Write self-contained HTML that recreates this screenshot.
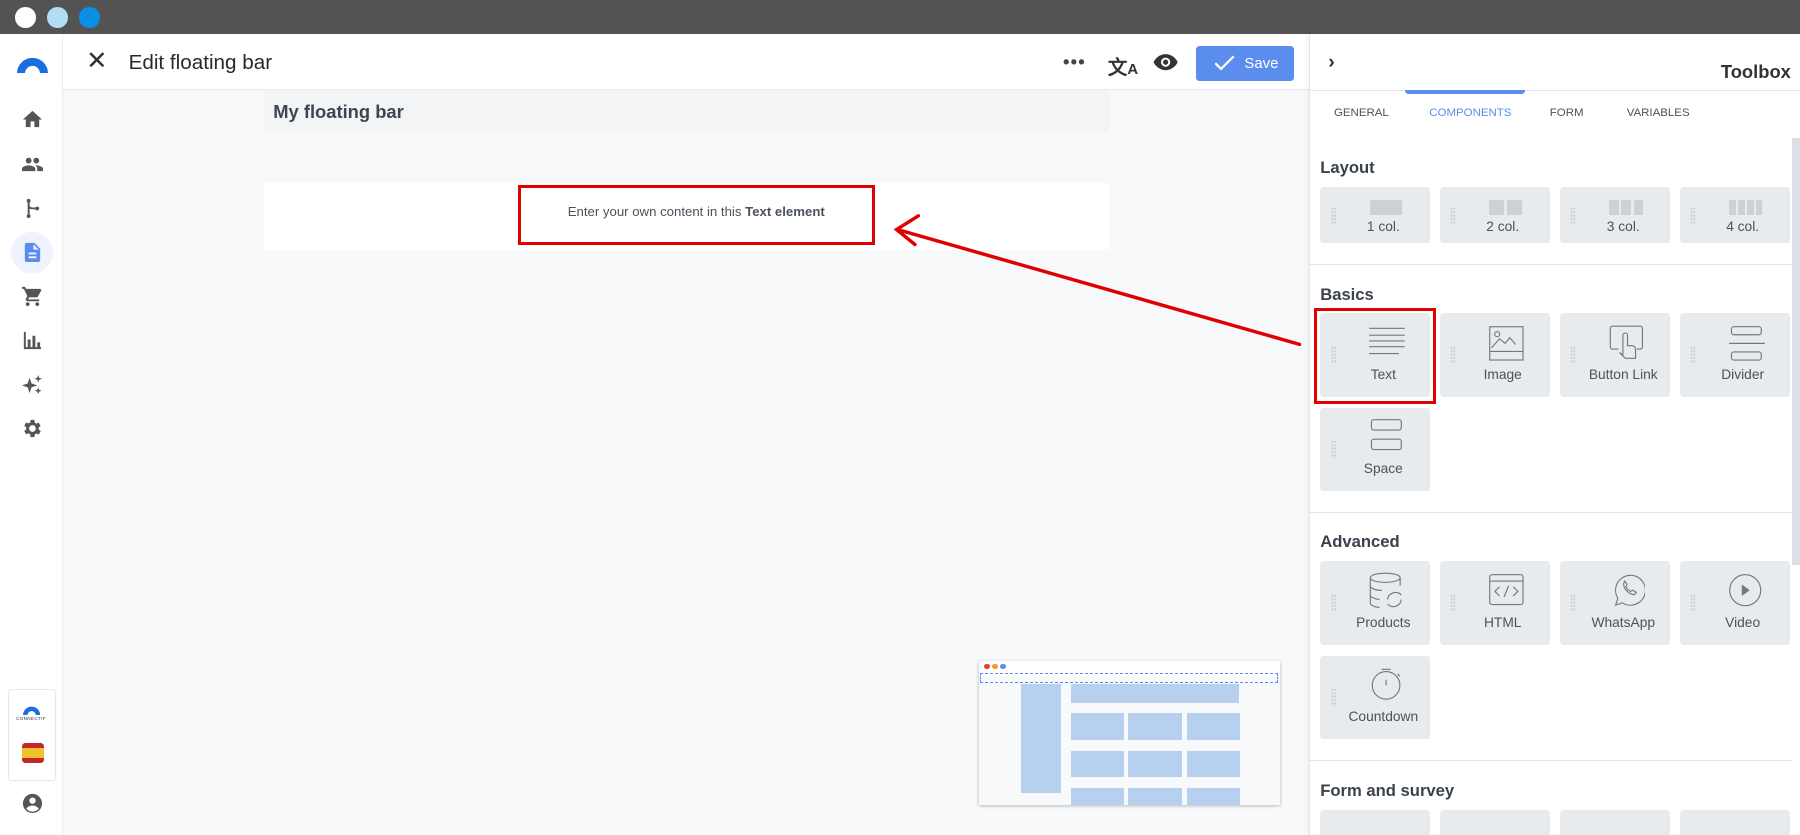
<!DOCTYPE html>
<html><head><meta charset="utf-8"><style>
*{box-sizing:border-box;margin:0;padding:0}
html,body{width:1800px;height:835px;overflow:hidden;background:#f8f9fa;font-family:"Liberation Sans",sans-serif}
#w{zoom:1.148;width:1568px;height:728px;position:relative;background:#f8f9fa}
.a{position:absolute}
.tile{position:absolute;width:96px;background:#e8ebee;border-radius:3px}
.tile .l{position:absolute;left:0;right:0;text-align:center;font-size:12px;color:#4a525c}
.tile .g{position:absolute;left:9px;width:5px;height:16px;background-image:radial-gradient(circle,#c9ced3 0.9px,transparent 1px);background-size:2.5px 3px}
.h{position:absolute;left:1150px;font-size:14.5px;font-weight:bold;color:#3a424c}
.dv{position:absolute;left:1141px;width:420px;height:1px;background:#e3e5e8}
.si{position:absolute;left:18px;width:20px;height:20px}
</style></head><body><div id="w">
<div class="a" style="left:0;top:0;width:1568px;height:30px;background:#535353"></div>
<div class="a" style="left:13px;top:6px;width:18px;height:18px;border-radius:50%;background:#fff"></div>
<div class="a" style="left:41px;top:6px;width:18px;height:18px;border-radius:50%;background:#b3dcf5"></div>
<div class="a" style="left:69px;top:6px;width:18px;height:18px;border-radius:50%;background:#0a8fe8"></div>

<div class="a" style="left:0;top:30px;width:55px;height:698px;background:#fff;border-right:1px solid #eceef0"></div>
<svg class="a" style="left:15px;top:48px" width="27" height="16" viewBox="0 0 27 16"><path d="M0 16 A13.5 13.5 0 0 1 27 16 L20 16 A6.5 6.5 0 0 0 7 16Z" fill="#1a6fe0"/></svg>

<div class="a" style="left:55px;top:30px;width:1085px;height:48px;background:#fff;border-bottom:1px solid #e6e8ea"></div>
<div class="a" style="left:75px;top:40px;font-size:22px;color:#333">✕</div>
<div class="a" style="left:112px;top:44px;font-size:18px;color:#262a2f">Edit floating bar</div>
<div class="a" style="left:926px;top:44px;font-size:16px;color:#444;font-weight:bold;letter-spacing:1px">•••</div>
<div class="a" style="left:965px;top:44px;font-size:17px;color:#333;font-weight:bold">文<span style="font-size:13px">A</span></div>
<svg class="a" style="left:1004px;top:46px" width="22" height="16" viewBox="0 0 22 16"><path d="M11 1C6 1 2 4.5 0.5 8 2 11.5 6 15 11 15s9-3.5 10.5-7C20 4.5 16 1 11 1z" fill="#333"/><circle cx="11" cy="8" r="4" fill="#fff"/><circle cx="11" cy="8" r="2.3" fill="#333"/></svg>
<div class="a" style="left:1042px;top:40px;width:85px;height:31px;background:#5b8def;border-radius:3px;color:#fff;font-size:13px;line-height:31px;padding-left:42px">Save</div>
<svg class="a" style="left:1057px;top:47px" width="20" height="16"><path d="M2 8l5 5L18 2" stroke="#fff" stroke-width="2" fill="none"/></svg>

<!-- sidebar icons -->
<svg class="si" style="top:94px" viewBox="0 0 24 24"><path d="M10 20v-6h4v6h5v-8h3L12 3 2 12h3v8z" fill="#555"/></svg>
<svg class="si" style="top:133px" viewBox="0 0 24 24"><path d="M16 11c1.7 0 3-1.3 3-3s-1.3-3-3-3-3 1.3-3 3 1.3 3 3 3zm-8 0c1.7 0 3-1.3 3-3S9.7 5 8 5 5 6.3 5 8s1.3 3 3 3zm0 2c-2.3 0-7 1.2-7 3.5V19h14v-2.5C15 14.2 10.3 13 8 13zm8 0c-.3 0-.6 0-1 .1 1.2.8 2 2 2 3.4V19h6v-2.5c0-2.3-4.7-3.5-7-3.5z" fill="#555"/></svg>
<svg class="si" style="top:172px" viewBox="0 0 24 24"><circle cx="8" cy="4" r="2" fill="#555"/><circle cx="8" cy="20" r="2" fill="#555"/><circle cx="17" cy="12" r="2" fill="#555"/><path d="M8 4v16M8 9c0 3 3 3 9 3" stroke="#555" stroke-width="2" fill="none"/></svg>
<div class="a" style="left:10px;top:202px;width:36px;height:36px;border-radius:50%;background:#eef3fd"></div>
<svg class="si" style="top:210px" viewBox="0 0 24 24"><path d="M14 2H6c-1.1 0-2 .9-2 2v16c0 1.1.9 2 2 2h12c1.1 0 2-.9 2-2V8zm2 16H8v-2h8zm0-4H8v-2h8zm-3-5V3.5L18.5 9z" fill="#5b8def"/></svg>
<svg class="si" style="top:248px" viewBox="0 0 24 24"><path d="M7 18c-1.1 0-2 .9-2 2s.9 2 2 2 2-.9 2-2-.9-2-2-2zM1 2v2h2l3.6 7.6L5.2 14c-.1.3-.2.6-.2 1 0 1.1.9 2 2 2h12v-2H7.4l1.1-2h7.5c.8 0 1.4-.4 1.7-1l3.6-6.5L20.4 4H5.2l-.9-2zm16 16c-1.1 0-2 .9-2 2s.9 2 2 2 2-.9 2-2-.9-2-2-2z" fill="#555"/></svg>
<svg class="si" style="top:287px" viewBox="0 0 24 24"><path d="M3 3h2v16h16v2H3zm4 8h3v8H7zm5-4h3v12h-3zm5 7h3v5h-3z" fill="#555"/></svg>
<svg class="si" style="top:325px" viewBox="0 0 24 24"><path d="M9 5l2 6 6 2-6 2-2 6-2-6-6-2 6-2zM18 2l1 3 3 1-3 1-1 3-1-3-3-1 3-1zM18 15l1 2.5 2.5 1-2.5 1-1 2.5-1-2.5-2.5-1 2.5-1z" fill="#555"/></svg>
<svg class="si" style="top:363px" viewBox="0 0 24 24"><path d="M19.4 13c.1-.3.1-.7.1-1s0-.7-.1-1l2.1-1.6-2-3.5-2.5 1c-.5-.4-1.1-.7-1.7-1L15 3h-4l-.4 2.7c-.6.3-1.2.6-1.7 1l-2.5-1-2 3.5L6.5 11c0 .3-.1.7-.1 1s0 .7.1 1l-2.1 1.6 2 3.5 2.5-1c.5.4 1.1.7 1.7 1L11 21h4l.4-2.7c.6-.3 1.2-.6 1.7-1l2.5 1 2-3.5zM13 15.5c-1.9 0-3.5-1.6-3.5-3.5s1.6-3.5 3.5-3.5 3.5 1.6 3.5 3.5-1.6 3.5-3.5 3.5z" fill="#555" transform="translate(-1 0)"/></svg>
<div class="a" style="left:7px;top:600px;width:42px;height:80px;border:1px solid #e6e8ea;border-radius:3px;background:#fff"></div>
<svg class="a" style="left:20px;top:614px" width="15" height="9" viewBox="0 0 27 16"><path d="M0 16 A13.5 13.5 0 0 1 27 16 L20 16 A6.5 6.5 0 0 0 7 16Z" fill="#1a6fe0"/></svg>
<div class="a" style="left:14px;top:624px;font-size:4px;color:#333;letter-spacing:0.3px">CONNECTIF</div>
<div class="a" style="left:19px;top:647px;width:19px;height:18px;border-radius:3px;background:linear-gradient(#c4272a 0 25%,#f2c12e 25% 75%,#c4272a 75%)"></div>
<svg class="si" style="top:690px" viewBox="0 0 24 24"><circle cx="12" cy="12" r="10" fill="#555"/><circle cx="12" cy="9" r="3.3" fill="#fff"/><path d="M5.5 17.5c1.5-2.5 4-3.3 6.5-3.3s5 .8 6.5 3.3c-1.7 2-4 3-6.5 3s-4.8-1-6.5-3z" fill="#fff"/></svg>

<!-- canvas -->
<div class="a" style="left:230px;top:78px;width:736px;height:37px;background:#f3f4f6"></div>
<div class="a" style="left:238px;top:88px;font-size:16px;font-weight:bold;color:#3d4550">My floating bar</div>
<div class="a" style="left:230px;top:159px;width:736px;height:59px;background:#fff"></div>
<div class="a" style="left:451px;top:161px;width:311px;height:52px;border:3px solid #e00000"></div>
<div class="a" style="left:451px;top:178px;width:311px;text-align:center;font-size:11.5px;color:#4a525c">Enter your own content in this <b>Text element</b></div>

<!-- minimap -->
<div class="a" style="left:853px;top:576px;width:262px;height:125px;background:#f8f9fa;box-shadow:0 1px 3px rgba(0,0,0,.3);overflow:hidden">
<div class="a" style="left:0;top:0;width:262px;height:13px;background:#fff"></div>
<div class="a" style="left:4px;top:2px;width:5px;height:5px;border-radius:50%;background:#e8412c"></div>
<div class="a" style="left:11px;top:2px;width:5px;height:5px;border-radius:50%;background:#f29b2b"></div>
<div class="a" style="left:18px;top:2px;width:5px;height:5px;border-radius:50%;background:#5b8def"></div>
<div class="a" style="left:1px;top:10px;width:259px;height:9px;border:1px dashed #5b8def"></div>
<div class="a" style="left:36px;top:20px;width:35px;height:95px;background:#b8d0f0"></div>
<div class="a" style="left:80px;top:20px;width:146px;height:16px;background:#b8d0f0"></div>
<div class="a" style="left:80px;top:45px;width:46px;height:24px;background:#b8d0f0"></div><div class="a" style="left:130px;top:45px;width:47px;height:24px;background:#b8d0f0"></div><div class="a" style="left:181px;top:45px;width:46px;height:24px;background:#b8d0f0"></div>
<div class="a" style="left:80px;top:78px;width:46px;height:23px;background:#b8d0f0"></div><div class="a" style="left:130px;top:78px;width:47px;height:23px;background:#b8d0f0"></div><div class="a" style="left:181px;top:78px;width:46px;height:23px;background:#b8d0f0"></div>
<div class="a" style="left:80px;top:110px;width:46px;height:20px;background:#b8d0f0"></div><div class="a" style="left:130px;top:110px;width:47px;height:20px;background:#b8d0f0"></div><div class="a" style="left:181px;top:110px;width:46px;height:20px;background:#b8d0f0"></div>
</div>

<!-- arrow -->
<svg class="a" style="left:0;top:0" width="1568" height="728"><g stroke="#e00000" stroke-width="3" fill="none" stroke-linecap="round"><path d="M1132 300L782 200"/><path d="M800 188L781 200 797 213"/></g></svg>

<!-- right panel -->
<div class="a" style="left:1140px;top:30px;width:428px;height:698px;background:#fff;border-left:1px solid #e3e5e8;box-shadow:-2px 0 4px rgba(0,0,0,.04)"></div>
<div class="a" style="left:1141px;top:78px;width:427px;height:1px;background:#e3e5e8"></div>
<div class="a" style="left:1157px;top:44px;font-size:17px;color:#333;font-weight:bold">›</div>
<div class="a" style="left:1499px;top:53px;font-size:16px;color:#333;font-weight:bold">Toolbox</div>
<div class="a" style="left:1224px;top:78px;width:104px;height:4px;background:#5b8def;border-radius:0 0 3px 3px"></div>
<div class="a" style="left:1162px;top:93px;font-size:10px;color:#4a525c">GENERAL</div>
<div class="a" style="left:1245px;top:93px;font-size:10px;color:#5b8def">COMPONENTS</div>
<div class="a" style="left:1350px;top:93px;font-size:10px;color:#4a525c">FORM</div>
<div class="a" style="left:1417px;top:93px;font-size:10px;color:#4a525c">VARIABLES</div>
<div class="a" style="left:1561px;top:120px;width:7px;height:372px;background:#dcdfe3"></div>

<div class="h" style="top:138px">Layout</div>
<div class="tile" style="left:1150px;top:163px;height:49px"><div class="g" style="top:17px"></div><div class="a" style="left:43px;top:11px;width:28px;height:13px;background:#cdd1d6"></div><div class="l" style="top:28px;left:14px">1 col.</div></div>
<div class="tile" style="left:1254px;top:163px;height:49px"><div class="g" style="top:17px"></div><div class="a" style="left:43px;top:11px;width:13px;height:13px;background:#cdd1d6"></div><div class="a" style="left:59px;top:11px;width:13px;height:13px;background:#cdd1d6"></div><div class="l" style="top:28px;left:14px">2 col.</div></div>
<div class="tile" style="left:1359px;top:163px;height:49px"><div class="g" style="top:17px"></div><div class="a" style="left:43px;top:11px;width:8px;height:13px;background:#cdd1d6"></div><div class="a" style="left:53px;top:11px;width:9px;height:13px;background:#cdd1d6"></div><div class="a" style="left:64px;top:11px;width:8px;height:13px;background:#cdd1d6"></div><div class="l" style="top:28px;left:14px">3 col.</div></div>
<div class="tile" style="left:1463px;top:163px;height:49px"><div class="g" style="top:17px"></div><div class="a" style="left:43px;top:11px;width:6px;height:13px;background:#cdd1d6"></div><div class="a" style="left:51px;top:11px;width:6px;height:13px;background:#cdd1d6"></div><div class="a" style="left:59px;top:11px;width:6px;height:13px;background:#cdd1d6"></div><div class="a" style="left:67px;top:11px;width:5px;height:13px;background:#cdd1d6"></div><div class="l" style="top:28px;left:14px">4 col.</div></div>
<div class="dv" style="top:230px"></div>

<div class="h" style="top:248px">Basics</div>
<div class="tile" style="left:1150px;top:273px;height:73px"><div class="g" style="top:28px"></div><svg class="a" style="left:42px;top:11px" width="34" height="28"><g stroke="#777" stroke-width="1"><path d="M1 2h31M1 8h31M1 13h31M1 18h31M1 24h26"/></g></svg><div class="l" style="top:47px;left:14px">Text</div></div>
<div class="tile" style="left:1254px;top:273px;height:73px"><div class="g" style="top:28px"></div><svg class="a" style="left:42px;top:10px" width="32" height="32"><g stroke="#777" fill="none"><rect x="1.5" y="1.5" width="29" height="29"/><path d="M1.5 23h29M3 20l7-8 5 4 4-5 5 6"/><circle cx="8" cy="8" r="2.2"/></g></svg><div class="l" style="top:47px;left:14px">Image</div></div>
<div class="tile" style="left:1359px;top:273px;height:73px"><div class="g" style="top:28px"></div><svg class="a" style="left:42px;top:10px" width="32" height="32"><g stroke="#777" fill="none"><path d="M9 21H4a2 2 0 0 1-2-2V3a2 2 0 0 1 2-2h24a2 2 0 0 1 2 2v16a2 2 0 0 1-2 2h-3"/><path d="M13 26V9a2 2 0 0 1 4 0v9h4a3 3 0 0 1 3 3v8H15l-5-5z"/></g></svg><div class="l" style="top:47px;left:14px">Button Link</div></div>
<div class="tile" style="left:1463px;top:273px;height:73px"><div class="g" style="top:28px"></div><svg class="a" style="left:42px;top:10px" width="34" height="32"><g stroke="#777" fill="none"><rect x="3" y="1.5" width="26" height="7" rx="2"/><rect x="3" y="23.5" width="26" height="7" rx="2"/><path d="M1 16h31"/></g></svg><div class="l" style="top:47px;left:14px">Divider</div></div>
<div class="a" style="left:1145px;top:268px;width:106px;height:84px;border:3px solid #e00000"></div>
<div class="tile" style="left:1150px;top:355px;height:73px"><div class="g" style="top:28px"></div><svg class="a" style="left:42px;top:9px" width="34" height="30"><g stroke="#777" fill="none"><rect x="3" y="1.5" width="26" height="9" rx="2"/><rect x="3" y="18.5" width="26" height="9" rx="2"/></g></svg><div class="l" style="top:47px;left:14px">Space</div></div>
<div class="dv" style="top:446px"></div>

<div class="h" style="top:463px">Advanced</div>
<div class="tile" style="left:1150px;top:489px;height:73px"><div class="g" style="top:28px"></div><svg class="a" style="left:42px;top:9px" width="34" height="32"><g stroke="#777" fill="none"><ellipse cx="15" cy="5" rx="13" ry="4"/><path d="M2 5v22c0 2 4 3.5 8 4M2 12c0 2 4 4 10 4M2 20c0 2 4 3.5 8 4M28 5v7"/><path d="M17 24a7 7 0 0 1 12-4M29 24a7 7 0 0 1-12 4"/></g></svg><div class="l" style="top:47px;left:14px">Products</div></div>
<div class="tile" style="left:1254px;top:489px;height:73px"><div class="g" style="top:28px"></div><svg class="a" style="left:42px;top:10px" width="32" height="30"><g stroke="#777" fill="none"><rect x="1.5" y="1.5" width="29" height="26" rx="2"/><path d="M1.5 7h29M10 12l-4 4 4 4M22 12l4 4-4 4M18 11l-4 10"/></g></svg><div class="l" style="top:47px;left:14px">HTML</div></div>
<div class="tile" style="left:1359px;top:489px;height:73px"><div class="g" style="top:28px"></div><svg class="a" style="left:44px;top:10px" width="30" height="30"><g stroke="#777" fill="none"><path d="M4 28l2-6A13 13 0 1 1 10 26z"/><path d="M11 9c0 5 4 9 9 10l2-2-3-2-2 1c-2-1-3-2-4-4l1-2-2-3z"/></g></svg><div class="l" style="top:47px;left:14px">WhatsApp</div></div>
<div class="tile" style="left:1463px;top:489px;height:73px"><div class="g" style="top:28px"></div><svg class="a" style="left:42px;top:10px" width="32" height="32"><circle cx="15" cy="15" r="13.5" stroke="#777" fill="none"/><path d="M12 10l7 5-7 5z" fill="#777"/></svg><div class="l" style="top:47px;left:14px">Video</div></div>
<div class="tile" style="left:1150px;top:571px;height:73px"><div class="g" style="top:28px"></div><svg class="a" style="left:43px;top:10px" width="30" height="30"><g stroke="#777" fill="none"><circle cx="14" cy="16" r="12"/><path d="M10 2h8M14 11v5M24 6l2 2"/></g></svg><div class="l" style="top:47px;left:14px">Countdown</div></div>
<div class="dv" style="top:662px"></div>

<div class="h" style="top:680px">Form and survey</div>
<div class="tile" style="left:1150px;top:706px;height:30px"></div>
<div class="tile" style="left:1254px;top:706px;height:30px"></div>
<div class="tile" style="left:1359px;top:706px;height:30px"></div>
<div class="tile" style="left:1463px;top:706px;height:30px"></div>
</div></body></html>
